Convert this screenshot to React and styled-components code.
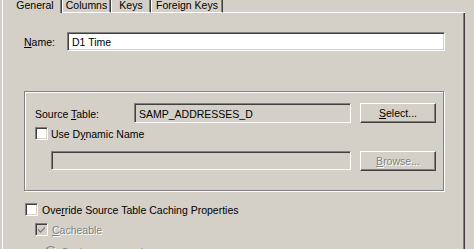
import React from "react";
import styled, { createGlobalStyle } from "styled-components";

const Global = createGlobalStyle`
  html, body { margin: 0; padding: 0; background: #d4d0c8; }
  body { font-family: "Liberation Sans", Arial, sans-serif; font-size: 10.5px; color: #000; }
`;

const Screen = styled.div`
  width: 474px;
  height: 249px;
  overflow: hidden;
  background: #d4d0c8;
  position: relative;
`;

const TabRow = styled.div`
  display: flex;
  height: 13px;
  padding-left: 2px;
  width: 463px;
`;

const Tab = styled.div`
  box-sizing: border-box;
  width: ${(p) => p.$w}px;
  height: 13px;
  padding-left: ${(p) => p.$pl || 0}px;
  border-left: 1px solid #fff;
  border-right: 1px solid #404040;
  box-shadow: inset -1px 0 0 #808080;
  border-bottom: ${(p) => (p.$active ? "none" : "1px solid #fff")};
  display: flex;
  justify-content: center;
  align-items: flex-start;
  line-height: 11px;
  white-space: nowrap;
`;

const TabFill = styled.div`
  flex: 1;
  height: 12px;
  border-bottom: 1px solid #fff;
`;

const Panel = styled.div`
  box-sizing: border-box;
  margin-left: 2px;
  width: 463px;
  min-height: 260px;
  border-left: 1px solid #fff;
  border-right: 1px solid #404040;
  box-shadow: inset -1px 0 0 #808080;
  display: flex;
  flex-direction: column;
`;

const Row = styled.div`
  flex: none;
  display: flex;
  align-items: center;
  margin-top: ${(p) => p.$mt || 0}px;
  margin-left: ${(p) => p.$ml || 0}px;
  height: ${(p) => p.$h || 20}px;
`;

const Label = styled.span`
  display: inline-block;
  width: ${(p) => p.$w}px;
  white-space: nowrap;
  padding-top: 1px;
`;

const U = styled.span`
  text-decoration: underline;
`;

const Field = styled.div`
  box-sizing: border-box;
  flex: none;
  width: ${(p) => p.$w}px;
  height: ${(p) => p.$h || 20}px;
  background: ${(p) => (p.$white ? "#fff" : "#d4d0c8")};
  border-top: 1px solid #808080;
  border-left: 1px solid #808080;
  border-right: 1px solid #fff;
  border-bottom: 1px solid #fff;
  box-shadow: inset 1px 1px 0 #404040, inset -1px -1px 0 #d4d0c8;
  padding: 1px 4px 0;
  display: flex;
  align-items: center;
  white-space: nowrap;
`;

const Button = styled.div`
  box-sizing: border-box;
  flex: none;
  width: 76px;
  height: ${(p) => p.$h || 20}px;
  margin-left: 9px;
  border-top: 1px solid #fff;
  border-left: 1px solid #fff;
  border-right: 1px solid #404040;
  border-bottom: 1px solid #404040;
  box-shadow: inset -1px -1px 0 #808080;
  display: flex;
  align-items: center;
  justify-content: center;
  color: ${(p) => (p.$disabled ? "#808080" : "#000")};
  text-shadow: ${(p) => (p.$disabled ? "1px 1px 0 #fff" : "none")};
`;

const Group = styled.div`
  box-sizing: border-box;
  flex: none;
  margin-top: 40px;
  margin-left: 21px;
  width: 420px;
  height: 100px;
  border: 1px solid #808080;
  box-shadow: inset 1px 1px 0 #fff, 1px 1px 0 #fff;
  padding: 11px 0 0 10px;
  display: flex;
  flex-direction: column;
`;

const Check = styled.span`
  box-sizing: border-box;
  flex: none;
  width: 13px;
  height: 13px;
  border-top: 1px solid #808080;
  border-left: 1px solid #808080;
  border-right: 1px solid #fff;
  border-bottom: 1px solid #fff;
  box-shadow: inset 1px 1px 0 #404040, inset -1px -1px 0 #d4d0c8;
  background: ${(p) => (p.$disabled ? "#d4d0c8" : "#fff")};
  margin-right: ${(p) => p.$gap || 4}px;
  display: flex;
  align-items: center;
  justify-content: center;
`;

const Radio = styled.span`
  box-sizing: border-box;
  flex: none;
  width: 12px;
  height: 12px;
  border-radius: 50%;
  border: 1px solid #808080;
  border-right-color: #fff;
  border-bottom-color: #fff;
  background: #d4d0c8;
  margin-right: 4px;
  display: flex;
  align-items: center;
  justify-content: center;
`;

const Dot = styled.span`
  width: 4px;
  height: 4px;
  border-radius: 50%;
  background: #808080;
`;

const CheckText = styled.span`
  white-space: nowrap;
  padding-top: 1px;
  color: ${(p) => (p.$disabled ? "#808080" : "#000")};
  text-shadow: ${(p) => (p.$disabled ? "1px 1px 0 #fff" : "none")};
`;

const Tick = () => (
  <svg width="9" height="9" viewBox="0 0 9 9">
    <path d="M1 3.5 L3.5 6 L8 1.5 L8 3.5 L3.5 8 L1 5.5 Z" fill="#808080" />
  </svg>
);

export default function App() {
  return (
    <Screen>
      <Global />
      <TabRow>
        <Tab $w={60} $pl={6} $active>General</Tab>
        <Tab $w={49}>Columns</Tab>
        <Tab $w={40}>Keys</Tab>
        <Tab $w={72}>Foreign Keys</Tab>
        <TabFill />
      </TabRow>
      <Panel>
        <Row $mt={19} $ml={21} $h={19}>
          <Label $w={43}><U>N</U>ame:</Label>
          <Field $w={378} $h={19} $white>D1 Time</Field>
        </Row>
        <Group>
          <Row>
            <Label $w={99}>Source <U>T</U>able:</Label>
            <Field $w={217}>SAMP_ADDRESSES_D</Field>
            <Button><span><U>S</U>elect...</span></Button>
          </Row>
          <Row $mt={4} $h={13}>
            <Check $gap={3} />
            <CheckText>Use D<U>y</U>namic Name</CheckText>
          </Row>
          <Row $mt={11} $ml={16} $h={19}>
            <Field $w={300} $h={19} />
            <Button $h={20} $disabled><span><U>B</U>rowse...</span></Button>
          </Row>
        </Group>
        <Row $mt={12} $ml={22} $h={13}>
          <Check />
          <CheckText>Ove<U>r</U>ride Source Table Caching Properties</CheckText>
        </Row>
        <Row $mt={7} $ml={32} $h={13}>
          <Check $disabled><Tick /></Check>
          <CheckText $disabled><U>C</U>acheable</CheckText>
        </Row>
        <Row $mt={9} $ml={42} $h={13}>
          <Radio><Dot /></Radio>
          <CheckText $disabled>Cache never expires</CheckText>
        </Row>
      </Panel>
    </Screen>
  );
}
